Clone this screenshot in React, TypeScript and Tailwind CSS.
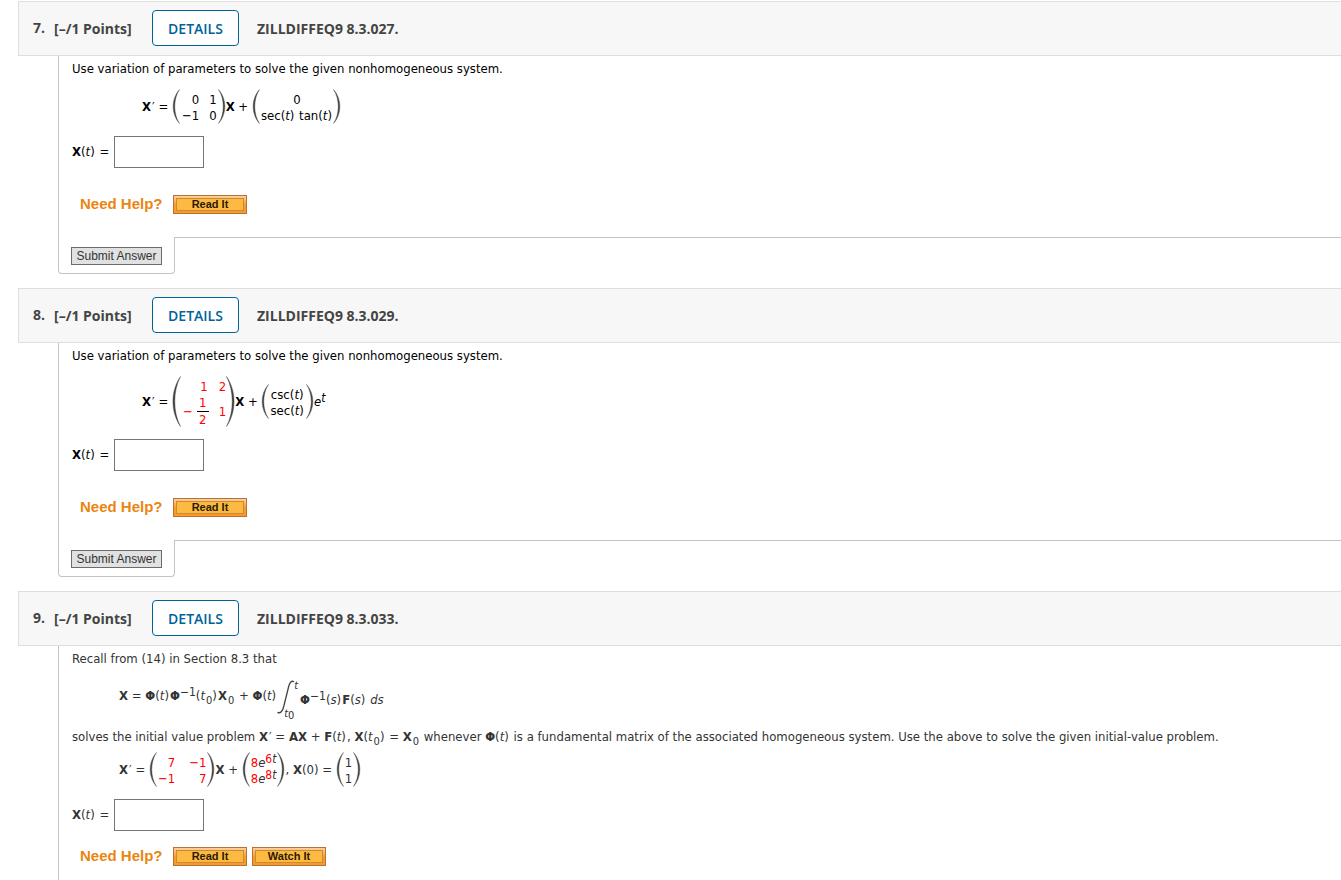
import { useId, type ReactNode } from 'react';

const INK = '#444';

function Paren({ side, height }: { side: 'left' | 'right'; height: 35 | 51 }) {
  const d =
    height === 35
      ? 'M7.5 0.5 C-1 10 -1 25 7.5 34.5 C1.2 25 1.2 10 7.5 0.5 Z'
      : 'M8.5 0.5 C-1.6 15 -1.6 36 8.5 50.5 C0.9 36 0.9 15 8.5 0.5 Z';
  const width = height === 35 ? 8 : 9;
  return (
    <svg
      width={width}
      height={height}
      viewBox={`0 0 ${width} ${height}`}
      className="shrink-0"
      aria-hidden="true"
    >
      <path
        d={d}
        fill={INK}
        stroke={INK}
        strokeWidth="0.4"
        transform={side === 'right' ? `translate(${width} 0) scale(-1 1)` : undefined}
      />
    </svg>
  );
}

function Matrix({
  children,
  tall = false,
  className = '',
}: {
  children: ReactNode;
  tall?: boolean;
  className?: string;
}) {
  const height = tall ? 51 : 35;
  return (
    <span className="inline-flex items-center">
      <Paren side="left" height={height} />
      <span className={`inline-grid pt-[3px] leading-4 ${className}`}>{children}</span>
      <Paren side="right" height={height} />
    </span>
  );
}

function Red({ children }: { children: ReactNode }) {
  return <span className="text-[#ff0000]">{children}</span>;
}

function Sup({ children }: { children: ReactNode }) {
  return <span className="relative -top-1 text-[12px]">{children}</span>;
}

function Sub({ children }: { children: ReactNode }) {
  return <span className="relative top-1 text-[11px]">{children}</span>;
}

function XPrime() {
  return (
    <>
      <b className="mr-px">X</b>′
    </>
  );
}

function Fn({ children }: { children: ReactNode }) {
  return (
    <span className="mr-px">
      (<i>{children}</i>)
    </span>
  );
}

function TZero() {
  return (
    <span className="mr-px">
      (<i className="mr-px">t</i>
      <Sub>0</Sub>)
    </span>
  );
}

function XZero() {
  return (
    <span className="mr-px">
      <b className="mr-px">X</b>
      <Sub>0</Sub>
    </span>
  );
}

function HelpButton({ children }: { children: ReactNode }) {
  return (
    <button
      type="button"
      className="h-[19px] w-[74px] border border-[#b87333] bg-linear-to-b from-[#fbd0a0] via-[#f99d33] to-[#f8982d] p-[2px] font-['Liberation_Sans',Arial,sans-serif] text-[11px] font-bold text-[#2b1a00]"
    >
      <span className="flex h-full items-center justify-center border border-[#d08a2e] bg-[#fdba43] pt-px leading-none">
        {children}
      </span>
    </button>
  );
}

function Answer({ help }: { help: string[] }) {
  const id = useId();
  return (
    <>
      <div className="mt-3 flex items-center gap-1">
        <label htmlFor={id} className="w-[38px] whitespace-nowrap">
          <b>X</b>
          <Fn>t</Fn> =
        </label>
        <input id={id} type="text" className="h-8 w-[90px] border border-[#767676] bg-white px-1" />
      </div>
      <div
        className={`flex items-center gap-[5px] pl-2 ${help.length > 1 ? 'mt-[15px]' : 'mt-[26px]'}`}
      >
        <span className="mr-1 w-[84px] whitespace-nowrap font-['Liberation_Sans',Arial,sans-serif] text-[15px] leading-5 font-bold text-[#ea8511]">
          Need Help?
        </span>
        {help.map((label) => (
          <HelpButton key={label}>{label}</HelpButton>
        ))}
      </div>
    </>
  );
}

function SubmitTab() {
  return (
    <div className="flex">
      <div className="h-[37px] w-[117px] rounded-b border border-t-0 border-[#c4c4c4] pt-[10px] pl-3">
        <button
          type="button"
          className="block h-[18px] w-[91px] border border-[#6b6b6b] bg-[#e1e1e1] font-['Liberation_Sans',Arial,sans-serif] text-[12px] leading-4 whitespace-nowrap text-[#333]"
        >
          Submit Answer
        </button>
      </div>
      <div className="flex-1 border-t border-[#c4c4c4]" />
    </div>
  );
}

function Question({
  number,
  code,
  children,
  submit = true,
  className = 'text-black',
}: {
  number: number;
  code: string;
  children: ReactNode;
  submit?: boolean;
  className?: string;
}) {
  return (
    <section>
      <header className="flex h-[55px] items-center border border-r-0 border-[#dedede] bg-[#f7f7f7] pb-0.5 pl-[14px] font-['Open_Sans',sans-serif] text-[14px] font-bold text-[#444]">
        <span className="w-[21px]">{number}.</span>
        <h2 className="w-[98px] pt-0.5 whitespace-nowrap">[–/1 Points]</h2>
        <button
          type="button"
          className="h-9 w-[87px] rounded border border-[#006298] bg-white pt-0.5 font-semibold text-[#006298]"
        >
          DETAILS
        </button>
        <span className="ml-[18px] pt-0.5">{code}</span>
      </header>
      <div className={`ml-10 ${className}`}>
        <div className={`border-l border-[#c4c4c4] pt-1 pl-[13px] ${submit ? 'pb-[23px]' : 'pb-[14px]'}`}>
          {children}
        </div>
        {submit ? <SubmitTab /> : null}
      </div>
    </section>
  );
}

function Integral() {
  return (
    <span className="mr-0.5 inline-flex h-10 items-stretch">
      <svg width="19" height="34" viewBox="0 0 19 34" className="self-start" aria-hidden="true">
        <path
          d="M17 1.8 C14.5 0.2 12.8 2.5 11.8 6 L6.6 27 C5.6 31 3.5 33.8 0.5 32.3"
          fill="none"
          stroke={INK}
          strokeWidth="1.3"
        />
      </svg>
      <span className="-ml-3 flex flex-col justify-between text-[11px] leading-3 italic">
        <span className="pl-2.5">t</span>
        <span>
          t<span className="relative top-0.5 not-italic">0</span>
        </span>
      </span>
    </span>
  );
}

export default function App() {
  return (
    <main className="flex flex-col gap-[14px] bg-white pt-px pl-[18px] font-['DejaVu_Sans_Condensed','DejaVu_Sans',Verdana,sans-serif] text-[13px] leading-[18px]">
      <Question number={7} code="ZILLDIFFEQ9 8.3.027.">
        <p>Use variation of parameters to solve the given nonhomogeneous system.</p>
        <div className="mt-[11px] flex items-center pl-[70px] whitespace-pre">
          <XPrime /> ={' '}
          <Matrix className="grid-cols-[auto_auto] gap-x-[10px] pr-px pl-0.5 text-right">
            <span>0</span>
            <span>1</span>
            <span>−1</span>
            <span>0</span>
          </Matrix>
          <b>X</b> +{' '}
          <Matrix className="pl-px text-center">
            <span>0</span>
            <span>
              sec<Fn>t</Fn> tan<Fn>t</Fn>
            </span>
          </Matrix>
        </div>
        <Answer help={['Read It']} />
      </Question>

      <Question number={8} code="ZILLDIFFEQ9 8.3.029.">
        <p>Use variation of parameters to solve the given nonhomogeneous system.</p>
        <div className="mt-[11px] flex items-center pl-[70px] whitespace-pre">
          <XPrime /> ={' '}
          <Matrix
            tall
            className="-mb-px grid-cols-[auto_auto] items-center gap-x-[10px] pl-0.5 text-right text-[#ff0000]"
          >
            <span className="pr-px">1</span>
            <span>2</span>
            <span className="inline-flex items-center">
              −
              <span className="ml-1 flex w-3 flex-col text-center">
                <span className="border-b border-black">1</span>
                <span>2</span>
              </span>
            </span>
            <span>1</span>
          </Matrix>
          <b>X</b> +{' '}
          <Matrix className="px-px text-center">
            <span>
              csc<Fn>t</Fn>
            </span>
            <span>
              sec<Fn>t</Fn>
            </span>
          </Matrix>
          <i>
            e<Sup>t</Sup>
          </i>
        </div>
        <Answer help={['Read It']} />
      </Question>

      <Question number={9} code="ZILLDIFFEQ9 8.3.033." submit={false} className="text-[#333]">
        <p>Recall from (14) in Section 8.3 that</p>
        <div className="mt-3 flex items-center pl-[47px] whitespace-pre">
          <span className="pb-2">
            <b>X</b> = <b>Φ</b>
            <Fn>t</Fn>
            <b>Φ</b>
            <Sup>−1</Sup>
            <TZero />
            <XZero /> + <b>Φ</b>
            <Fn>t</Fn>
          </span>
          <Integral />
          <span>
            <b>Φ</b>
            <Sup>−1</Sup>
            <Fn>s</Fn>
            <b>F</b>
            <Fn>s</Fn> <i>ds</i>
          </span>
        </div>
        <p className="mt-2">
          solves the initial value problem <XPrime /> = <b>AX</b> + <b>F</b>
          <Fn>t</Fn>, <b>X</b>
          <TZero /> = <XZero /> whenever <b>Φ</b>
          <Fn>t</Fn> is a fundamental matrix of the associated homogeneous system. Use the above to
          solve the given initial-value problem.
        </p>
        <div className="mt-[5px] flex items-center pl-[47px] whitespace-pre">
          <XPrime /> ={' '}
          <Matrix className="grid-cols-[auto_auto] gap-x-[14px] px-px text-right text-[#ff0000]">
            <span>7</span>
            <span>−1</span>
            <span>−1</span>
            <span>7</span>
          </Matrix>
          <b>X</b> +{' '}
          <Matrix className="px-px">
            <span>
              <Red>8</Red>
              <i>e</i>
              <Sup>
                <Red>6</Red>
                <i>t</i>
              </Sup>
            </span>
            <span>
              <Red>8</Red>
              <i>e</i>
              <Sup>
                <Red>8</Red>
                <i>t</i>
              </Sup>
            </span>
          </Matrix>
          , <b>X</b>(0) ={' '}
          <Matrix className="px-px">
            <span>1</span>
            <span>1</span>
          </Matrix>
        </div>
        <Answer help={['Read It', 'Watch It']} />
      </Question>
    </main>
  );
}
